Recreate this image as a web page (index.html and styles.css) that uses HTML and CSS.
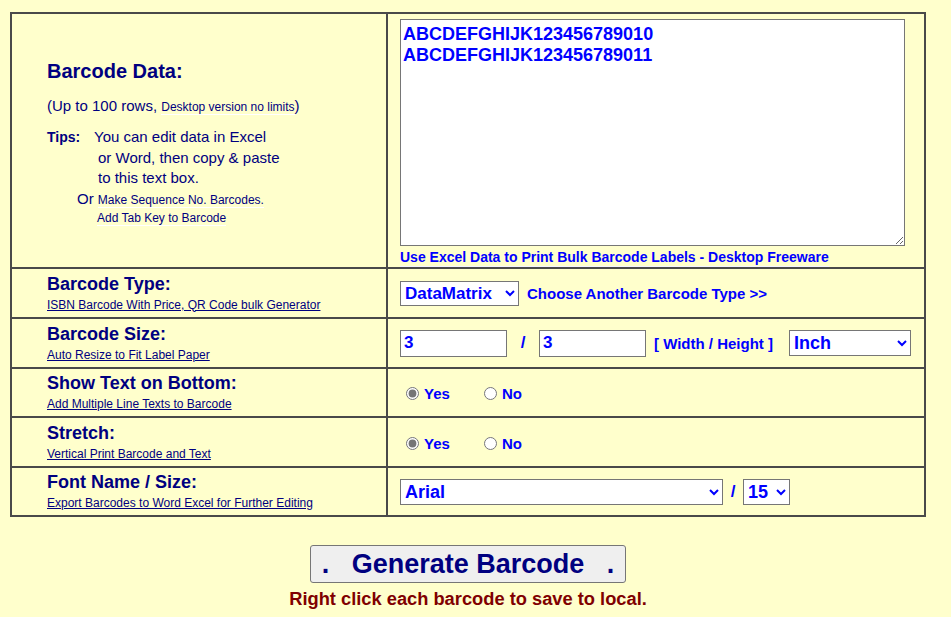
FILE: index.html
```html
<!DOCTYPE html>
<html>
  <head>
    <title>Online Barcode Generator</title>
    <link rel="stylesheet" href="styles.css">
  </head>
  <body>
    <div class="page">
      <table class="form-table">
        <tr class="row-data">
          <td class="label-cell label-top">
            <div class="label-title">Barcode Data:</div>
            <div class="limit-note">(Up to 100 rows, <a href="#" class="small-link">Desktop version no limits</a>)</div>
            <div class="tips">
              <span class="tips-head">Tips:</span>
              <div class="tips-body">
                <div>You can edit data in Excel</div>
                <div class="tips-more">or Word, then copy &amp; paste</div>
                <div class="tips-more">to this text box.</div>
              </div>
            </div>
            <div class="or-line">Or <a href="#" class="small-link">Make Sequence No. Barcodes.</a></div>
            <div class="tab-line"><a href="#" class="small-link">Add Tab Key to Barcode</a></div>
          </td>
          <td class="field-cell field-top">
            <textarea id="barcode-data">ABCDEFGHIJK123456789010
ABCDEFGHIJK123456789011</textarea>
            <a href="#" class="bulk-link">Use Excel Data to Print Bulk Barcode Labels - Desktop Freeware</a>
          </td>
        </tr>
        <tr class="row-small">
          <td class="label-cell">
            <div class="row-title">Barcode Type:</div>
            <a href="#" class="sub-link">ISBN Barcode With Price, QR Code bulk Generator</a>
          </td>
          <td class="field-cell">
            <div class="field-line">
              <select id="barcode-type" class="type-select">
                <option>DataMatrix</option>
                <option>Code128</option>
                <option>QR Code</option>
              </select>
              <a href="#" class="type-link">Choose Another Barcode Type &gt;&gt;</a>
            </div>
          </td>
        </tr>
        <tr class="row-small">
          <td class="label-cell">
            <div class="row-title">Barcode Size:</div>
            <a href="#" class="sub-link">Auto Resize to Fit Label Paper</a>
          </td>
          <td class="field-cell">
            <div class="field-line">
              <input type="text" id="width" class="size-input" value="3">
              <span class="slash">/</span>
              <input type="text" id="height" class="size-input" value="3">
              <span class="size-note">[ Width / Height ]</span>
              <select id="unit" class="unit-select">
                <option>Inch</option>
                <option>CM</option>
                <option>MM</option>
              </select>
            </div>
          </td>
        </tr>
        <tr class="row-small row-short">
          <td class="label-cell">
            <div class="row-title">Show Text on Bottom:</div>
            <a href="#" class="sub-link">Add Multiple Line Texts to Barcode</a>
          </td>
          <td class="field-cell">
            <div class="field-line radio-line">
              <label class="radio"><input type="radio" name="show-text" checked>Yes</label>
              <label class="radio"><input type="radio" name="show-text">No</label>
            </div>
          </td>
        </tr>
        <tr class="row-small">
          <td class="label-cell">
            <div class="row-title">Stretch:</div>
            <a href="#" class="sub-link">Vertical Print Barcode and Text</a>
          </td>
          <td class="field-cell">
            <div class="field-line radio-line">
              <label class="radio"><input type="radio" name="stretch" checked>Yes</label>
              <label class="radio"><input type="radio" name="stretch">No</label>
            </div>
          </td>
        </tr>
        <tr class="row-small row-short">
          <td class="label-cell">
            <div class="row-title">Font Name / Size:</div>
            <a href="#" class="sub-link">Export Barcodes to Word Excel for Further Editing</a>
          </td>
          <td class="field-cell">
            <div class="field-line">
              <select id="font-name" class="font-select">
                <option>Arial</option>
                <option>Times New Roman</option>
                <option>Courier New</option>
              </select>
              <span class="slash slash-narrow">/</span>
              <select id="font-size" class="fsize-select">
                <option>15</option>
                <option>12</option>
                <option>18</option>
              </select>
            </div>
          </td>
        </tr>
      </table>

      <div class="actions">
        <button type="button" id="generate-button">.&nbsp;&nbsp;&nbsp;Generate Barcode&nbsp;&nbsp;&nbsp;.</button>
        <p class="save-note">Right click each barcode to save to local.</p>
      </div>
    </div>
  </body>
</html>
```

FILE: styles.css
```css
body {
  margin: 0;
  font-family: "Liberation Sans", Arial, sans-serif;
  background-color: #ffffcc;
  color: #000080;
}
a {
  color: #000080;
}
.page {
  width: 916px;
  padding: 12px 0 0 10px;
}
.form-table {
  width: 916px;
  border-collapse: collapse;
  border: 2px solid #4a4a4a;
}
.form-table td {
  border: 2px solid #4a4a4a;
  vertical-align: middle;
  padding: 0;
}
.form-table .label-cell {
  width: 339px;
  padding-left: 35px;
}
.form-table .field-cell {
  padding-left: 12px;
}
.row-small td {
  height: 48px;
}
.row-short td {
  height: 47px;
}
/* cell height here is content only, so subtract the top padding */
.form-table .label-top {
  vertical-align: top;
  padding-top: 46px;
  height: 207px;
}
.form-table .field-top {
  vertical-align: top;
  padding-top: 5px;
  height: 248px;
}

/* barcode data cell */
.label-title {
  font-size: 20px;
  font-weight: bold;
  line-height: 23px;
}
.limit-note {
  font-size: 15px;
  line-height: 17px;
  margin-top: 14px;
}
.small-link {
  font-size: 12px;
  text-decoration: none;
  border-bottom: 1px solid #ffffff;
}
.tips {
  display: flex;
  margin-top: 11px;
  line-height: 20.5px;
}
.tips-head {
  font-size: 14px;
  font-weight: bold;
  width: 47px;
}
.tips-body {
  font-size: 15px;
}
.tips-more {
  padding-left: 4px;
}
.or-line {
  font-size: 15px;
  margin-left: 30px;
  line-height: 20px;
}
.tab-line {
  font-size: 12px;
  margin-left: 50px;
  line-height: 16px;
}
textarea {
  display: block;
  width: 505px;
  height: 227px;
  box-sizing: border-box;
  border: 1px solid #767676;
  padding: 4px 2px 2px;
  margin: 0;
  font-family: "Liberation Sans", Arial, sans-serif;
  font-size: 18px;
  font-weight: bold;
  color: #0000ff;
  line-height: 21px;
  background: #fff;
}
.bulk-link {
  display: block;
  width: fit-content;
  margin-top: 3px;
  font-size: 14px;
  font-weight: bold;
  color: #0000ff;
  text-decoration: none;
  border-bottom: 1px solid #f4f4ff;
  line-height: 17px;
}

/* small rows */
.row-title {
  font-size: 18px;
  font-weight: bold;
  line-height: 21px;
}
.sub-link {
  font-size: 12px;
  line-height: 16px;
}
.field-line {
  display: flex;
  align-items: center;
}
select,
.size-input {
  font-family: "Liberation Sans", Arial, sans-serif;
  font-weight: bold;
  color: #0000ff;
  background: #fff;
  border: 1px solid #767676;
  border-radius: 0;
  box-sizing: border-box;
  margin: 0;
}
.type-select {
  width: 119px;
  height: 25px;
  font-size: 17px;
}
.type-link {
  font-size: 15px;
  font-weight: bold;
  color: #0000ff;
  text-decoration: none;
  margin-left: 8px;
}
.size-input {
  width: 107px;
  height: 27px;
  font-size: 17px;
  padding: 0 3px;
}
.slash {
  font-size: 17px;
  font-weight: bold;
  color: #0000ff;
  width: 32px;
  text-align: center;
}
.slash-narrow {
  width: 20px;
}
.size-note {
  font-size: 15px;
  font-weight: bold;
  color: #0000ff;
  margin: 0 16px 0 8px;
}
.unit-select {
  width: 122px;
  height: 26px;
  font-size: 18px;
}
.radio-line {
  padding-top: 2px;
}
.radio {
  display: flex;
  align-items: center;
  font-size: 15px;
  font-weight: bold;
  color: #0000ff;
  margin-left: 6px;
  margin-right: 28px;
}
.radio input {
  accent-color: #757575;
  width: 13px;
  height: 13px;
  margin: 0 5px 0 0;
}
.font-select {
  width: 323px;
  height: 26px;
  font-size: 18px;
}
.fsize-select {
  width: 47px;
  height: 26px;
  font-size: 18px;
}

/* generate */
.actions {
  text-align: center;
  padding-top: 28px;
}
#generate-button {
  width: 316px;
  height: 38px;
  font-family: "Liberation Sans", Arial, sans-serif;
  font-size: 27px;
  font-weight: bold;
  color: #000080;
  background-color: #efefef;
  border: 1px solid #767676;
  border-radius: 3px;
  padding: 0;
}
.save-note {
  margin: 5px 0 0;
  font-size: 18.3px;
  font-weight: bold;
  color: #800000;
}
```
